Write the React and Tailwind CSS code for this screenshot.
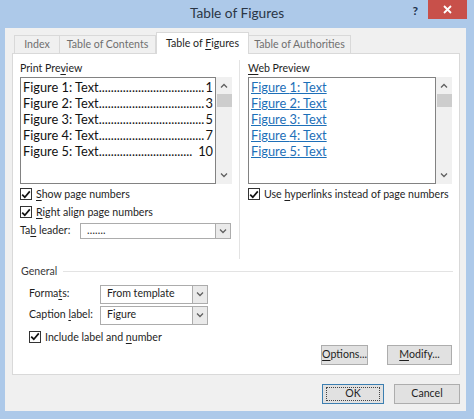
import React from "react";

const ui = { fontFamily: 'Lato, "Noto Sans", sans-serif' };
const preview = { fontFamily: 'Lato, "Liberation Sans", sans-serif' };

const figures = [
  { n: 1, page: "1", dots: 35 },
  { n: 2, page: "3", dots: 35 },
  { n: 3, page: "5", dots: 35 },
  { n: 4, page: "7", dots: 35 },
  { n: 5, page: "10", dots: 31 },
];

// label text with one underlined access key
function Key({ before = "", k, after = "" }) {
  return (
    <span className="whitespace-nowrap">
      {before}
      <span className="underline underline-offset-2">{k}</span>
      {after}
    </span>
  );
}

function Chevron({ up }) {
  return (
    <svg width="8" height="5" viewBox="0 0 8 5" className="text-[#606060]">
      <path
        d={up ? "M1 4.5 L4 1.5 L7 4.5" : "M1 0.5 L4 3.5 L7 0.5"}
        fill="none"
        stroke="currentColor"
        strokeWidth="1.3"
      />
    </svg>
  );
}

function ScrollBar() {
  return (
    <div className="w-[16px] shrink-0 bg-[#f0f0f0] flex flex-col items-center">
      <div className="h-[17px] flex items-center justify-center">
        <Chevron up />
      </div>
      <div className="w-[15px] h-[13px] bg-[#cdcdcd]" />
      <div className="flex-1" />
      <div className="h-[17px] flex items-center justify-center">
        <Chevron />
      </div>
    </div>
  );
}

function Check({ children, className = "" }) {
  return (
    <div className={`flex items-center gap-[4px] ${className}`}>
      <div className="w-[12px] h-[12px] shrink-0 border border-[#333333] bg-white flex items-center justify-center">
        <svg width="10" height="9" viewBox="0 0 10 9">
          <path d="M1.2 4.6 L3.8 7.2 L8.8 1.4" fill="none" stroke="#111" strokeWidth="1.7" />
        </svg>
      </div>
      <span className="text-[10.6px] text-[#1e1e1e] leading-none">{children}</span>
    </div>
  );
}

function Select({ value, className = "" }) {
  return (
    <div className={`border border-[#acacac] bg-white flex items-stretch ${className}`}>
      <span className="flex-1 flex items-center pl-[6px] text-[10.6px] text-[#1e1e1e]">{value}</span>
      <div className="w-[15px] border-l border-[#acacac] bg-[#eaeaea] flex items-center justify-center">
        <Chevron />
      </div>
    </div>
  );
}

function Button({ children, primary, className = "" }) {
  return (
    <div
      className={`h-[20px] flex items-center justify-center text-[10.6px] text-[#1e1e1e] bg-[#e1e1e1] border ${
        primary ? "border-[#3c7fb1]" : "border-[#adadad]"
      } ${className}`}
    >
      {primary ? (
        <span className="w-[calc(100%-6px)] h-[14px] border border-dotted border-[#444] flex items-center justify-center">
          {children}
        </span>
      ) : (
        children
      )}
    </div>
  );
}

const tabs = [
  { label: "Index", w: "w-[46px]" },
  { label: "Table of Contents", w: "w-[96px]" },
  { label: "Table of Figures", w: "w-[93px]", active: true },
  { label: "Table of Authorities", w: "w-[102px]" },
];

export default function App() {
  return (
    <div className="w-[474px] h-[419px] bg-[#adc9e9] flex flex-col overflow-hidden" style={ui}>
      {/* title bar */}
      <div className="h-[28px] grid grid-cols-[1fr_auto_1fr] items-start">
        <div />
        <div className="pt-[3px] text-[13.7px] text-[#2b3645]">Table of Figures</div>
        <div className="flex justify-end pr-[7px]">
          <span className="mt-[2px] mr-[10px] text-[12px] font-bold text-[#20324a]">?</span>
          <div className="w-[39px] h-[19px] bg-[#c8504a] flex items-center justify-center">
            <svg width="9" height="9" viewBox="0 0 9 9">
              <path d="M1 1 L8 8 M8 1 L1 8" stroke="white" strokeWidth="1.8" />
            </svg>
          </div>
        </div>
      </div>

      {/* dialog body */}
      <div className="ml-[5px] w-[461px] h-[383px] bg-[#f0f0f0] flex flex-col">
        {/* tab strip */}
        <div className="pt-[6px] pl-[9px] flex items-end h-[25px]">
          {tabs.map((t) =>
            t.active ? (
              <div
                key={t.label}
                className={`${t.w} h-[22px] bg-white border border-b-0 border-[#d9d9d9] flex items-center justify-center text-[10.6px] text-[#1e1e1e] relative top-[1px]`}
              >
                <Key before="Table of " k="F" after="igures" />
              </div>
            ) : (
              <div
                key={t.label}
                className={`${t.w} h-[18px] bg-[#f0f0f0] border border-b-0 border-l-0 first:border-l border-[#d9d9d9] flex items-center justify-center text-[10.6px] text-[#6f6f6f] whitespace-nowrap`}
              >
                {t.label}
              </div>
            )
          )}
        </div>

        {/* tab panel */}
        <div className="ml-[7px] w-[448px] h-[322px] bg-white border border-[#d9d9d9] flex flex-col">
          <div className="flex h-[205px] pt-[6px]">
            {/* print preview column */}
            <div className="w-[227px] shrink-0 pl-[7px] flex flex-col border-r border-[#e3e3e3]">
              <div className="text-[10.6px] text-[#1e1e1e] h-[16px] leading-[16px]">
                <Key before="Print Pre" k="v" after="iew" />
              </div>
              <div className="mt-[1px] flex h-[107px] w-[212px]">
                <div className="w-[196px] border border-[#828282] px-[2px] pt-[1px]" style={preview}>
                  {figures.map((f) => (
                    <div key={f.n} className="flex text-[12.8px] leading-[16px] text-[#111] whitespace-nowrap">
                      <span>Figure {f.n}: Text</span>
                      <span className="flex-1 min-w-0 overflow-hidden">{".".repeat(f.dots)}</span>
                      <span className="pl-[1px]">{f.n === 5 ? "\u00a0" + f.page : f.page}</span>
                    </div>
                  ))}
                </div>
                <ScrollBar />
              </div>
              <Check className="mt-[4px]">
                <Key k="S" after="how page numbers" />
              </Check>
              <Check className="mt-[6px]">
                <Key k="R" after="ight align page numbers" />
              </Check>
              <div className="mt-[5px] flex items-center">
                <span className="w-[60px] text-[10.6px] text-[#1e1e1e]">
                  <Key before="Ta" k="b" after=" leader:" />
                </span>
                <Select value="……." className="w-[151px] h-[16px]" />
              </div>
            </div>

            {/* web preview column */}
            <div className="pl-[8px] flex flex-col">
              <div className="text-[10.6px] text-[#1e1e1e] h-[16px] leading-[16px]">
                <Key k="W" after="eb Preview" />
              </div>
              <div className="mt-[1px] flex h-[107px] w-[204px]">
                <div className="w-[189px] border border-[#828282] px-[2px] pt-[1px]" style={preview}>
                  {figures.map((f) => (
                    <div
                      key={f.n}
                      className="text-[12.8px] leading-[16px] text-[#1d6fb8] underline underline-offset-1"
                    >
                      Figure {f.n}: Text
                    </div>
                  ))}
                </div>
                <ScrollBar />
              </div>
              <Check className="mt-[4px]">
                <Key before="Use " k="h" after="yperlinks instead of page numbers" />
              </Check>
            </div>
          </div>

          {/* general group */}
          <div className="mt-[5px] pl-[8px] pr-[6px] flex items-center gap-[6px]">
            <span className="text-[10.6px] text-[#3a3a3a]">General</span>
            <div className="flex-1 h-px bg-[#e3e3e3]" />
          </div>
          <div className="pl-[16px] mt-[5px] flex flex-col gap-[2px]">
            <div className="flex items-center">
              <span className="w-[71px] text-[10.6px] text-[#1e1e1e]">
                <Key before="Forma" k="t" after="s:" />
              </span>
              <Select value="From template" className="w-[108px] h-[19px]" />
            </div>
            <div className="flex items-center">
              <span className="w-[71px] text-[10.6px] text-[#1e1e1e]">
                <Key before="Caption " k="l" after="abel:" />
              </span>
              <Select value="Figure" className="w-[108px] h-[19px]" />
            </div>
          </div>
          <Check className="ml-[16px] mt-[6px]">
            <Key before="Include label and " k="n" after="umber" />
          </Check>

          <div className="mt-auto mb-[9px] pr-[7px] flex justify-end gap-[19px]">
            <Button className="w-[47px] h-[19px]">
              <Key k="O" after="ptions..." />
            </Button>
            <Button className="w-[65px] h-[19px]">
              <Key k="M" after="odify..." />
            </Button>
          </div>
        </div>

        {/* dialog buttons */}
        <div className="mt-[9px] flex justify-end gap-[10px] pr-[6px]">
          <Button primary className="w-[62px]">OK</Button>
          <Button className="w-[66px]">Cancel</Button>
        </div>
      </div>
    </div>
  );
}
